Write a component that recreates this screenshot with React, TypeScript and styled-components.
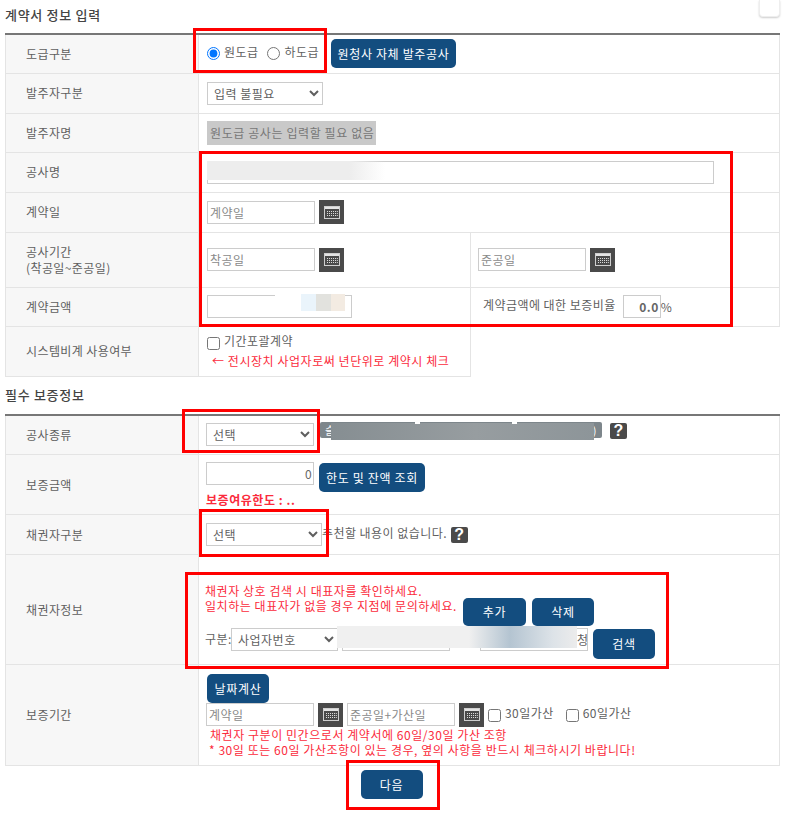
import React from "react";
import styled, { createGlobalStyle } from "styled-components";

const GlobalStyle = createGlobalStyle`
  html, body {
    margin: 0;
    padding: 0;
    background: #fff;
    font-family: "Noto Sans CJK KR", "Noto Sans", sans-serif;
    font-size: 12px;
    color: #5f5f5f;
  }
  * { box-sizing: border-box; }
`;

const Page = styled.div`
  position: relative;
  width: 800px;
  height: 833px;
  padding-left: 5px;
  overflow: hidden;
`;

const SectionTitle = styled.div<{ $h: number; $pt?: number }>`
  height: ${(p) => p.$h}px;
  width: 775px;
  display: flex;
  align-items: flex-start;
  justify-content: space-between;
  padding-top: ${(p) => p.$pt ?? 6}px;
  font-size: 13px;
  font-weight: 500;
  letter-spacing: 0.7px;
  line-height: 18px;
  color: #444;
`;

const CornerButton = styled.div`
  width: 21px;
  height: 17px;
  margin-top: -6px;
  background: #fff;
  border: 1px solid #eee;
  border-top: none;
  border-radius: 0 0 4px 4px;
  box-shadow: 0 1px 2px rgba(0, 0, 0, 0.2);
`;

const FormTable = styled.table`
  width: 775px;
  table-layout: fixed;
  border-collapse: collapse;
  border-top: 2px solid #777;
`;

const Row = styled.tr<{ $h: number }>`
  height: ${(p) => p.$h}px;
`;

const Label = styled.th`
  padding: 0 0 0 20px;
  border: 1px solid #e4e4e4;
  background: #f7f7f7;
  text-align: left;
  font-weight: 400;
  font-size: 12px;
  letter-spacing: 0.4px;
  line-height: 16px;
  color: #5f5f5f;
`;

const Cell = styled.td<{ $pl?: number }>`
  padding: 0 0 0 ${(p) => p.$pl ?? 7}px;
  border: 1px solid #e4e4e4;
  vertical-align: middle;
  font-size: 12px;
  letter-spacing: 0.45px;
`;

const Line = styled.div<{ $gap?: number; $mt?: number; $align?: string }>`
  position: relative;
  display: flex;
  align-items: ${(p) => p.$align ?? "center"};
  gap: ${(p) => p.$gap ?? 4}px;
  margin-top: ${(p) => p.$mt ?? 0}px;
  white-space: nowrap;
`;

const Radio = styled.input.attrs({ type: "radio" })`
  width: 13px;
  height: 13px;
  margin: 0;
`;

const Check = styled.input.attrs({ type: "checkbox" })`
  width: 13px;
  height: 13px;
  margin: 2px 0 0;
`;

const OptionText = styled.span<{ $mr?: number }>`
  margin-top: -4px;
  margin-right: ${(p) => p.$mr ?? 0}px;
  color: #5f5f5f;
`;

const NavyButton = styled.button<{ $w: number; $h?: number; $ml?: number; $mt?: number; $mb?: number }>`
  width: ${(p) => p.$w}px;
  height: ${(p) => p.$h ?? 29}px;
  margin: ${(p) => p.$mt ?? 0}px 0 ${(p) => p.$mb ?? 0}px ${(p) => p.$ml ?? 0}px;
  padding: 0;
  flex: none;
  border: none;
  border-radius: 5px;
  background: #134d7f;
  color: #fff;
  font-family: inherit;
  font-size: 12px;
  letter-spacing: 0.65px;
`;

const Select = styled.select<{ $w: number }>`
  width: ${(p) => p.$w}px;
  height: 23px;
  flex: none;
  padding: 0 0 0 2px;
  border: 1px solid #ccc;
  border-radius: 0;
  background: #fff;
  font-family: inherit;
  font-size: 12px;
  letter-spacing: 0.5px;
  color: #5f5f5f;
`;

const TextField = styled.input<{ $w: number; $ml?: number; $right?: boolean; $bold?: boolean }>`
  width: ${(p) => p.$w}px;
  height: 23px;
  flex: none;
  margin-left: ${(p) => p.$ml ?? 0}px;
  padding: 0 1px 0 2px;
  border: 1px solid #ccc;
  background: #fff;
  font-family: inherit;
  font-size: 12px;
  letter-spacing: 0.45px;
  color: #666;
  text-align: ${(p) => (p.$right ? "right" : "left")};
  font-weight: ${(p) => (p.$bold ? 700 : 400)};
  &::placeholder { color: #8a8a8a; opacity: 1; }
`;

const DisabledNote = styled.div`
  width: 169px;
  height: 24px;
  line-height: 24px;
  padding-left: 3px;
  background: #c9c9c9;
  color: #777;
  letter-spacing: 0.6px;
  white-space: nowrap;
`;

const CalendarButton = styled.span`
  width: 25px;
  height: 24px;
  flex: none;
  display: flex;
  align-items: center;
  justify-content: center;
  background: #4a4a4a;
`;

const RedNote = styled.div<{ $bold?: boolean; $mt?: number; $pl?: number }>`
  margin-top: ${(p) => p.$mt ?? 0}px;
  padding-left: ${(p) => p.$pl ?? 0}px;
  color: #fb2b3c;
  font-size: 12px;
  letter-spacing: 0.55px;
  line-height: 15px;
  font-weight: ${(p) => (p.$bold ? 700 : 400)};
  white-space: nowrap;
`;

const HelpBadge = styled.span<{ $ml?: number; $mt?: number }>`
  width: 17px;
  height: 16px;
  flex: none;
  margin: ${(p) => p.$mt ?? 0}px 0 0 ${(p) => p.$ml ?? 0}px;
  display: inline-flex;
  align-items: center;
  justify-content: center;
  border-radius: 2px;
  background: #4a4a4a;
  color: #fff;
  font-family: "Liberation Sans", sans-serif;
  font-size: 16px;
  font-weight: 700;
`;

const MaskedPill = styled.div`
  position: relative;
  width: 282px;
  height: 16px;
  margin-top: -10px;
  padding: 0 5px;
  display: flex;
  align-items: center;
  justify-content: space-between;
  border-radius: 2px;
  background: #7d868b;
  color: #fff;
  font-size: 11px;
`;

const SearchLabel = styled.span`
  width: 26px;
  flex: none;
  margin-top: 2px;
  color: #5f5f5f;
`;

/* blurred-out parts of the original capture */
const Smudge = styled.div<{ $x: number; $y: number; $w: number; $h: number; $bg: string }>`
  position: absolute;
  left: ${(p) => p.$x}px;
  top: ${(p) => p.$y}px;
  width: ${(p) => p.$w}px;
  height: ${(p) => p.$h}px;
  background: ${(p) => p.$bg};
`;

const Highlight = styled.div<{ $x: number; $y: number; $w: number; $h: number }>`
  position: absolute;
  left: ${(p) => p.$x}px;
  top: ${(p) => p.$y}px;
  width: ${(p) => p.$w}px;
  height: ${(p) => p.$h}px;
  border: 3px solid #f00;
  pointer-events: none;
`;

const NextRow = styled.div`
  width: 775px;
  display: flex;
  justify-content: center;
  padding: 4px 2px 0 0;
`;

const ButtonPair = styled.div`
  display: flex;
  gap: 6px;
  margin-left: 6px;
`;

const CalendarIcon = () => (
  <svg width="16" height="13" viewBox="0 0 16 13">
    <rect x="0.5" y="0.5" width="15" height="12" fill="none" stroke="#cfcfcf" strokeWidth="1" />
    <rect x="1" y="1" width="14" height="2" fill="#e4e4e4" />
    {[5, 7, 9].map((y) =>
      [3, 5, 7, 9, 11, 12.8].map((x) => <rect key={`${x}-${y}`} x={x} y={y} width="1" height="1" fill="#dcdcdc" />)
    )}
  </svg>
);

const DateField = ({ placeholder }: { placeholder: string }) => (
  <>
    <TextField $w={108} placeholder={placeholder} />
    <CalendarButton>
      <CalendarIcon />
    </CalendarButton>
  </>
);

const App = () => {
  return (
    <Page>
      <GlobalStyle />
      <SectionTitle $h={33}>
        계약서 정보 입력
        <CornerButton />
      </SectionTitle>
      <FormTable>
        <colgroup>
          <col style={{ width: 193 }} />
          <col style={{ width: 272 }} />
          <col />
        </colgroup>
        <tbody>
          <Row $h={39}>
            <Label>도급구분</Label>
            <Cell colSpan={2} $pl={8}>
              <Line>
                <Radio name="contract" defaultChecked />
                <OptionText $mr={5}>원도급</OptionText>
                <Radio name="contract" />
                <OptionText $mr={8}>하도급</OptionText>
                <NavyButton $w={125}>원청사 자체 발주공사</NavyButton>
              </Line>
            </Cell>
          </Row>
          <Row $h={40}>
            <Label>발주자구분</Label>
            <Cell colSpan={2} $pl={8}>
              <Select $w={116}>
                <option>입력 불필요</option>
              </Select>
            </Cell>
          </Row>
          <Row $h={39}>
            <Label>발주자명</Label>
            <Cell colSpan={2} $pl={8}>
              <DisabledNote>원도급 공사는 입력할 필요 없음</DisabledNote>
            </Cell>
          </Row>
          <Row $h={40}>
            <Label>공사명</Label>
            <Cell colSpan={2} $pl={8}>
              <Line>
                <TextField $w={507} />
                <Smudge $x={0} $y={0} $w={178} $h={19} $bg="linear-gradient(90deg, #ededed 80%, rgba(237,237,237,0))" />
              </Line>
            </Cell>
          </Row>
          <Row $h={40}>
            <Label>계약일</Label>
            <Cell colSpan={2} $pl={8}>
              <Line>
                <DateField placeholder="계약일" />
              </Line>
            </Cell>
          </Row>
          <Row $h={55}>
            <Label>
              공사기간
              <br />
              (착공일~준공일)
            </Label>
            <Cell $pl={8}>
              <Line>
                <DateField placeholder="착공일" />
              </Line>
            </Cell>
            <Cell>
              <Line>
                <DateField placeholder="준공일" />
              </Line>
            </Cell>
          </Row>
          <Row $h={39}>
            <Label>계약금액</Label>
            <Cell $pl={8}>
              <Line>
                <TextField $w={145} />
                <Smudge $x={68} $y={-1} $w={26} $h={2} $bg="#fff" />
                <Smudge $x={94} $y={-1} $w={15} $h={17} $bg="#eaf4fb" />
                <Smudge $x={109} $y={-1} $w={15} $h={17} $bg="#e2e2de" />
                <Smudge $x={124} $y={-1} $w={14} $h={17} $bg="#f3ebe2" />
              </Line>
            </Cell>
            <Cell $pl={12}>
              <Line $gap={0}>
                <OptionText $mr={7}>계약금액에 대한 보증비율</OptionText>
                <TextField $w={38} $right $bold defaultValue="0.0" />
                %
              </Line>
            </Cell>
          </Row>
          <Row $h={50}>
            <Label>시스템비계 사용여부</Label>
            <Cell $pl={8}>
              <Line>
                <Check />
                <OptionText>기간포괄계약</OptionText>
              </Line>
              <RedNote $mt={3} $pl={5}>← 전시장치 사업자로써 년단위로 계약시 체크</RedNote>
            </Cell>
          </Row>
        </tbody>
      </FormTable>

      <SectionTitle $h={37} $pt={9}>필수 보증정보</SectionTitle>
      <FormTable>
        <colgroup>
          <col style={{ width: 193 }} />
          <col />
        </colgroup>
        <tbody>
          <Row $h={40}>
            <Label>공사종류</Label>
            <Cell>
              <Line $gap={6}>
                <Select $w={108}>
                  <option>선택</option>
                </Select>
                <MaskedPill>
                  <span>슬</span>
                  <span>)</span>
                  <Smudge $x={11} $y={1} $w={263} $h={17} $bg="linear-gradient(90deg, #868e92, #979da0 55%, #8d9599)" />
                  <Smudge $x={95} $y={0} $w={5} $h={2} $bg="#fff" />
                  <Smudge $x={192} $y={0} $w={5} $h={2} $bg="#fff" />
                </MaskedPill>
                <HelpBadge $ml={2} $mt={-8}>?</HelpBadge>
              </Line>
            </Cell>
          </Row>
          <Row $h={60}>
            <Label>보증금액</Label>
            <Cell>
              <Line $gap={5} $align="flex-start">
                <TextField $w={108} $right defaultValue="0" />
                <NavyButton $w={106} $mt={1}>한도 및 잔액 조회</NavyButton>
              </Line>
              <RedNote $bold>보증여유한도 : ..</RedNote>
            </Cell>
          </Row>
          <Row $h={40}>
            <Label>채권자구분</Label>
            <Cell>
              <Line $gap={0}>
                <Select $w={116}>
                  <option>선택</option>
                </Select>
                <OptionText $mr={4}>추천할 내용이 없습니다.</OptionText>
                <HelpBadge>?</HelpBadge>
              </Line>
            </Cell>
          </Row>
          <Row $h={110}>
            <Label>채권자정보</Label>
            <Cell $pl={6}>
              <Line $gap={0} $align="flex-end" $mt={22}>
                <div>
                  <RedNote>채권자 상호 검색 시 대표자를 확인하세요.</RedNote>
                  <RedNote>일치하는 대표자가 없을 경우 지점에 문의하세요.</RedNote>
                </div>
                <ButtonPair>
                  <NavyButton $w={63} $h={28} $mb={-13}>추가</NavyButton>
                  <NavyButton $w={62} $h={28} $mb={-13}>삭제</NavyButton>
                </ButtonPair>
              </Line>
              <Line $gap={0} $align="flex-start" $mt={15}>
                <SearchLabel>구분:</SearchLabel>
                <Select $w={107}>
                  <option>사업자번호</option>
                </Select>
                <TextField $w={108} $ml={4} />
                <TextField $w={108} $ml={30} />
                <NavyButton $w={62} $h={30} $ml={5} $mt={1}>검색</NavyButton>
                <Smudge $x={132} $y={-2} $w={240} $h={22} $bg="linear-gradient(90deg, #f0f0f0 55%, #b4c4d1 72%, #dde3e8 90%, #ececec)" />
                <Smudge $x={372} $y={3} $w={10} $h={15} $bg="transparent">청</Smudge>
              </Line>
            </Cell>
          </Row>
          <Row $h={101}>
            <Label>보증기간</Label>
            <Cell $pl={7}>
              <NavyButton $w={62} $ml={1}>날짜계산</NavyButton>
              <Line>
                <DateField placeholder="계약일" />
                <DateField placeholder="준공일+가산일" />
                <Check />
                <OptionText $mr={8}>30일가산</OptionText>
                <Check />
                <OptionText>60일가산</OptionText>
              </Line>
              <RedNote $pl={4}>채권자 구분이 민간으로서 계약서에 60일/30일 가산 조항</RedNote>
              <RedNote $pl={3}>* 30일 또는 60일 가산조항이 있는 경우, 옆의 사항을 반드시 체크하시기 바랍니다!</RedNote>
            </Cell>
          </Row>
        </tbody>
      </FormTable>
      <NextRow>
        <NavyButton $w={62}>다음</NavyButton>
      </NextRow>

      <Highlight $x={193} $y={28} $w={134} $h={45} />
      <Highlight $x={199} $y={151} $w={534} $h={176} />
      <Highlight $x={182} $y={409} $w={138} $h={44} />
      <Highlight $x={199} $y={509} $w={130} $h={48} />
      <Highlight $x={185} $y={572} $w={484} $h={97} />
      <Highlight $x={346} $y={760} $w={94} $h={50} />
    </Page>
  );
};

export default App;
